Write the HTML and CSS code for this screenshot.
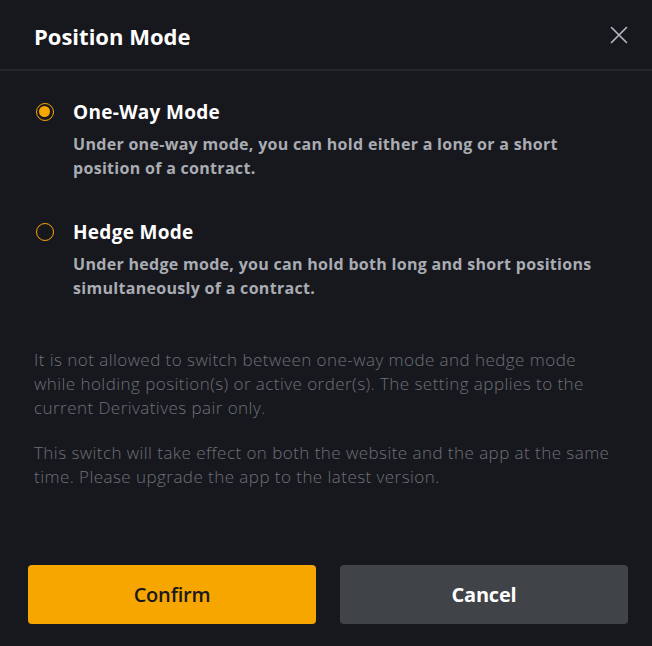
FILE: index.html
```html
<!DOCTYPE html>
<html lang="en">
<head>
<meta charset="utf-8">
<title>Position Mode</title>
<link rel="stylesheet" href="styles.css">
</head>
<body>
<div class="dialog">
  <div class="header">
    <h1 class="title">Position Mode</h1>
    <button class="close" aria-label="Close">
      <svg width="18" height="18" viewBox="0 0 18 18"><path d="M1.5 1.5L16.5 16.5M16.5 1.5L1.5 16.5" stroke="#b7bac0" stroke-width="1.6" fill="none" stroke-linecap="round"/></svg>
    </button>
  </div>
  <div class="body">
    <div class="option">
      <span class="radio checked"></span>
      <div class="option-text">
        <div class="option-title">One-Way Mode</div>
        <div class="option-desc">Under one-way mode, you can hold either a long or a short position of a contract.</div>
      </div>
    </div>
    <div class="option second">
      <span class="radio"></span>
      <div class="option-text">
        <div class="option-title">Hedge Mode</div>
        <div class="option-desc">Under hedge mode, you can hold both long and short positions simultaneously of a contract.</div>
      </div>
    </div>
    <p class="note first">It is not allowed to switch between one-way mode and hedge mode while holding position(s) or active order(s). The setting applies to the current Derivatives pair only.</p>
    <p class="note">This switch will take effect on both the website and the app at the same time. Please upgrade the app to the latest version.</p>
  </div>
  <div class="actions">
    <button class="btn primary">Confirm</button>
    <button class="btn secondary">Cancel</button>
  </div>
</div>
</body>
</html>
```
FILE: styles.css
```css
html, body {
  margin: 0;
  padding: 0;
  background: #17181e;
}
body {
  font-family: "Open Sans", "Noto Sans", sans-serif;
  color: #f5f5f5;
  width: 652px;
  height: 646px;
  overflow: hidden;
}
.dialog {
  display: flex;
  flex-direction: column;
  height: 646px;
}
.header {
  height: 71px;
  border-bottom: 2px solid #25272d;
  display: flex;
  align-items: center;
  justify-content: space-between;
  padding: 0 24px 0 34px;
  box-sizing: border-box;
  flex: none;
}
.title {
  margin: 0;
  font-size: 22px;
  font-weight: 700;
  color: #ffffff;
  line-height: 28px;
  padding-top: 2px;
  letter-spacing: 0;
}
.close {
  background: none;
  border: 0;
  padding: 0;
  width: 18px;
  height: 18px;
  display: flex;
}
.body {
  padding: 27px 30px 0 36px;
  flex: 1;
}
.option {
  display: flex;
  gap: 19px;
}
.option.second {
  margin-top: 38px;
}
.radio {
  flex: none;
  width: 18px;
  height: 18px;
  box-sizing: border-box;
  border: 1.5px solid #f7a600;
  border-radius: 50%;
  margin-top: 5px;
  position: relative;
}
.radio.checked::after {
  content: "";
  position: absolute;
  left: 2px;
  top: 2px;
  width: 11px;
  height: 11px;
  border-radius: 50%;
  background: #f7a600;
}
.option-title {
  font-size: 19px;
  font-weight: 700;
  line-height: 28px;
  color: #ffffff;
  letter-spacing: 0.3px;
}
.option-desc {
  margin-top: 6px;
  font-size: 16px;
  font-weight: 700;
  line-height: 24px;
  color: #a9acb2;
  letter-spacing: 0.3px;
}
.note {
  margin: 0;
  font-size: 17px;
  font-weight: 300;
  line-height: 24px;
  color: #6d7077;
  margin-left: -2px;
  letter-spacing: 0.45px;
}
.note.first {
  margin-top: 48px;
}
.note + .note {
  margin-top: 21px;
}
.actions {
  display: flex;
  gap: 24px;
  padding: 0 24px 22px 28px;
  flex: none;
}
.btn {
  flex: 1;
  height: 59px;
  border: 0;
  border-radius: 4px;
  font-family: "Open Sans", "Noto Sans", sans-serif;
  font-size: 20px;
  font-weight: 700;
  letter-spacing: -0.2px;
}
.btn.primary {
  background: #f7a600;
  color: #17181e;
  font-weight: 600;
}
.btn.secondary {
  background: #404348;
  color: #ffffff;
}
```
